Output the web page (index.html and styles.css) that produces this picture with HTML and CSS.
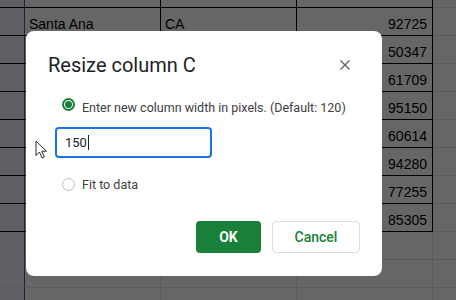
FILE: index.html
```html
<!DOCTYPE html>
<html lang="en">
<head>
    <meta charset="UTF-8">
    <meta name="viewport" content="width=device-width, initial-scale=1.0">
    <title>Resize column C</title>
    <link rel="stylesheet" href="styles.css">
</head>
<body>
    <div class="sheet">
        <div class="row">
            <div class="cell head"></div>
            <div class="cell"></div>
            <div class="cell"></div>
            <div class="cell num"></div>
            <div class="cell blank"></div>
        </div>
        <div class="row">
            <div class="cell head"></div>
            <div class="cell">Santa Ana</div>
            <div class="cell">CA</div>
            <div class="cell num">92725</div>
            <div class="cell blank"></div>
        </div>
        <div class="row">
            <div class="cell head"></div>
            <div class="cell"></div>
            <div class="cell"></div>
            <div class="cell num">50347</div>
            <div class="cell blank"></div>
        </div>
        <div class="row">
            <div class="cell head"></div>
            <div class="cell"></div>
            <div class="cell"></div>
            <div class="cell num">61709</div>
            <div class="cell blank"></div>
        </div>
        <div class="row">
            <div class="cell head"></div>
            <div class="cell"></div>
            <div class="cell"></div>
            <div class="cell num">95150</div>
            <div class="cell blank"></div>
        </div>
        <div class="row">
            <div class="cell head"></div>
            <div class="cell"></div>
            <div class="cell"></div>
            <div class="cell num">60614</div>
            <div class="cell blank"></div>
        </div>
        <div class="row">
            <div class="cell head"></div>
            <div class="cell"></div>
            <div class="cell"></div>
            <div class="cell num">94280</div>
            <div class="cell blank"></div>
        </div>
        <div class="row">
            <div class="cell head"></div>
            <div class="cell"></div>
            <div class="cell"></div>
            <div class="cell num">77255</div>
            <div class="cell blank"></div>
        </div>
        <div class="row">
            <div class="cell head"></div>
            <div class="cell"></div>
            <div class="cell"></div>
            <div class="cell num">85305</div>
            <div class="cell blank"></div>
        </div>
        <div class="row empty">
            <div class="cell head"></div>
            <div class="cell"></div>
            <div class="cell"></div>
            <div class="cell"></div>
            <div class="cell blank"></div>
        </div>
        <div class="row empty">
            <div class="cell head"></div>
            <div class="cell"></div>
            <div class="cell"></div>
            <div class="cell"></div>
            <div class="cell blank"></div>
        </div>
        <div class="row empty">
            <div class="cell head"></div>
            <div class="cell"></div>
            <div class="cell"></div>
            <div class="cell"></div>
            <div class="cell blank"></div>
        </div>
    </div>

    <div class="overlay">
        <div class="dialog">
            <div class="dialog-head">
                <h2>Resize column C</h2>
                <button class="close" aria-label="Close">
                    <svg width="10" height="10" viewBox="0 0 10 10">
                        <path d="M0.5 0.5 L9.5 9.5 M9.5 0.5 L0.5 9.5" stroke="#5f6368" stroke-width="1.4" fill="none"/>
                    </svg>
                </button>
            </div>

            <div class="option">
                <span class="radio checked"></span>
                <span class="option-label">Enter new column width in pixels. (Default: 120)</span>
            </div>
            <div class="width-field">150<span class="caret"></span></div>

            <div class="option option-fit">
                <span class="radio"></span>
                <span class="option-label">Fit to data</span>
            </div>

            <div class="actions">
                <button class="btn btn-ok">OK</button>
                <button class="btn btn-cancel">Cancel</button>
            </div>
        </div>
    </div>

    <svg class="cursor" width="13" height="20" viewBox="0 0 13 20">
        <path d="M1 1 L1 15.5 L4.5 12 L7 18 L9.3 17 L6.8 11.2 L11.5 11.2 Z" fill="#fff" stroke="#2a2a2a" stroke-width="1" stroke-linejoin="round"/>
    </svg>
</body>
</html>
```

FILE: styles.css
```css
body {
    margin: 0;
    background-color: #fff;
    font-family: "Liberation Sans", Arial, sans-serif;
    overflow: hidden;
    height: 300px;
}
.sheet {
    margin-top: -20px;
    height: 320px;
    overflow: hidden;
}
.row {
    display: grid;
    grid-template-columns: 25px 136px 136px 136px 1fr;
    height: 28px;
}
.cell {
    box-sizing: border-box;
    border-right: 1px solid #000;
    border-bottom: 1px solid #000;
    display: flex;
    align-items: flex-end;
    padding: 0 4px 3px 4px;
    font-size: 14px;
    line-height: 16px;
    color: #000;
    white-space: nowrap;
}
.cell.num {
    justify-content: flex-end;
    padding-right: 5px;
}
.cell.head {
    background-color: #ebf1fd;
    border-right-color: #4a5a82;
    padding: 0;
}
.cell.blank {
    border-right: none;
    border-bottom-color: #e2e3e3;
}
.row.empty .cell {
    border-bottom-color: #e2e3e3;
}
.row.empty .cell:not(.head) {
    border-right-color: #e2e3e3;
}
.row.empty .cell.blank {
    border-right: none;
}

.overlay {
    position: fixed;
    top: 0;
    left: 0;
    right: 0;
    bottom: 0;
    background-color: rgba(0, 0, 0, 0.6);
    padding: 31px 0 0 26px;
}
.dialog {
    width: 356px;
    height: 245px;
    box-sizing: border-box;
    background-color: #fff;
    border-radius: 8px;
    padding: 22px 22px 23px 22px;
    font-family: Roboto, "Liberation Sans", sans-serif;
    color: #3c4043;
}
.dialog-head {
    display: flex;
    justify-content: space-between;
    align-items: center;
    height: 24px;
    margin-bottom: 21px;
}
h2 {
    margin: 0;
    font-size: 20px;
    font-weight: 400;
    line-height: 24px;
    color: #202124;
}
.close {
    width: 24px;
    height: 24px;
    margin-right: 3px;
    padding: 0;
    border: none;
    background: none;
    display: flex;
    align-items: center;
    justify-content: center;
}
.option {
    display: flex;
    align-items: flex-start;
    margin-left: 14px;
    height: 20px;
    font-size: 12.5px;
    line-height: 20px;
}
.option-label {
    margin-left: 7px;
}
.radio {
    width: 13px;
    height: 13px;
    box-sizing: border-box;
    border: 1.5px solid #bdc1c6;
    border-radius: 50%;
    display: flex;
    align-items: center;
    justify-content: center;
}
.radio.checked {
    border: 2px solid #188038;
}
.radio.checked::after {
    content: "";
    width: 7px;
    height: 7px;
    border-radius: 50%;
    background-color: #188038;
}
.option-fit {
    margin-top: 17px;
}
.option-fit .radio {
    margin-top: 3px;
}
.width-field {
    margin: 9px 0 0 7px;
    width: 157px;
    height: 31px;
    box-sizing: border-box;
    border: 2px solid #1a73e8;
    border-radius: 4px;
    padding-left: 8px;
    display: flex;
    align-items: center;
    font-size: 13px;
    color: #202124;
}
.caret {
    width: 1px;
    height: 15px;
    background-color: #202124;
    margin-left: 1px;
}
.actions {
    display: flex;
    justify-content: flex-end;
    gap: 11px;
    margin-top: 26px;
}
.btn {
    height: 32px;
    border-radius: 4px;
    font-family: Roboto, "Liberation Sans", sans-serif;
    font-size: 14px;
    padding: 0;
    cursor: pointer;
}
.btn-ok {
    width: 65px;
    background-color: #188038;
    border: none;
    color: #fff;
    font-weight: 700;
}
.btn-cancel {
    width: 88px;
    background-color: #fff;
    border: 1px solid #dadce0;
    color: #188038;
    font-weight: 500;
}
.cursor {
    position: absolute;
    left: 35px;
    top: 140px;
}
```
